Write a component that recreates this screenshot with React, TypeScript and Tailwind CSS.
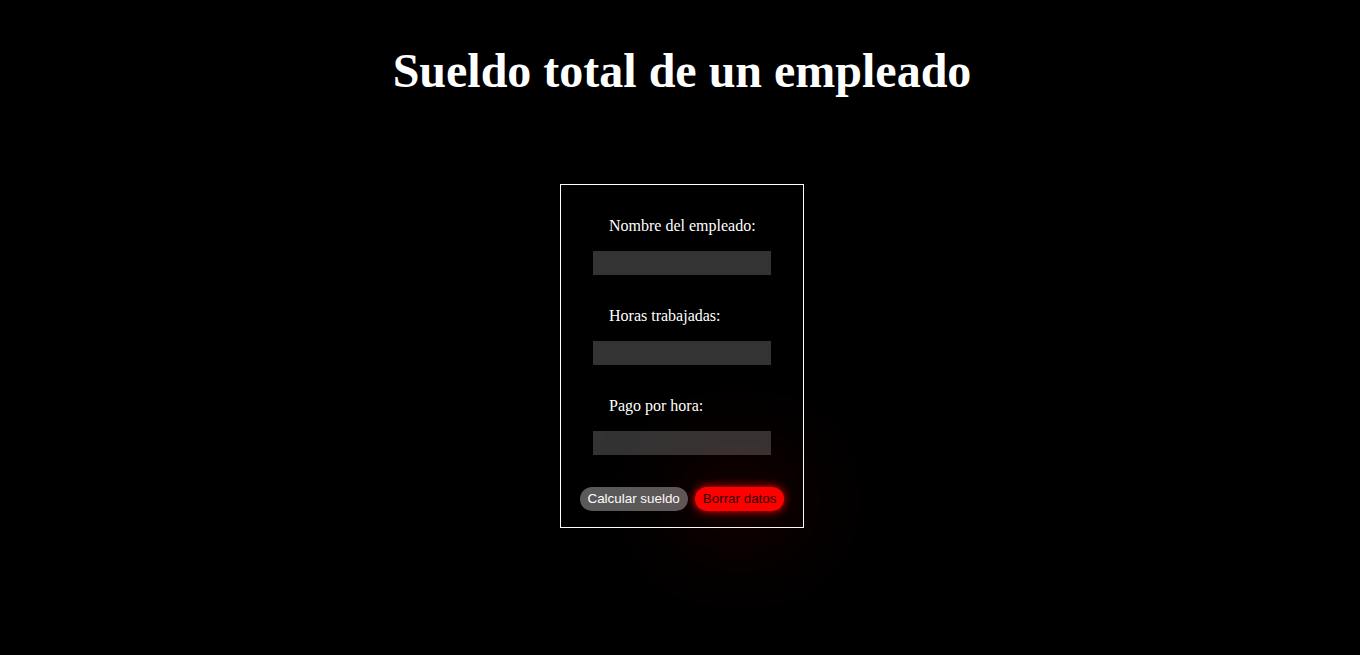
const fields = ["Nombre del empleado:", "Horas trabajadas:", "Pago por hora:"];

export default function App() {
  return (
    <div className="min-h-[655px] bg-black flex flex-col items-center pl-[4px] font-['Liberation_Serif',serif] text-white">
      <h1 className="mt-[47px] text-[48px] leading-none font-bold">Sueldo total de un empleado</h1>

      <form className="mt-[89px] w-[244px] border border-white pt-[31px] pb-[16px] flex flex-col">
        {fields.map((label, i) => (
          <div key={label} className={i > 0 ? "mt-[31px]" : ""}>
            <label className="block pl-[48px] text-[16px] leading-[20px]">{label}</label>
            <input
              type="text"
              className="block mt-[15px] ml-[32px] w-[178px] h-[24px] bg-[#333333] border-0 outline-none text-white"
            />
          </div>
        ))}

        <div className="mt-[32px] flex justify-center gap-[7px] font-['Liberation_Sans',Arial,sans-serif] text-[13.4px]">
          <button
            type="button"
            className="h-[24px] px-[8px] rounded-full bg-[#5a5a5a] text-white"
          >
            Calcular sueldo
          </button>
          <button
            type="button"
            className="h-[24px] px-[8px] rounded-full bg-[#ff0000] text-[#2a0000] shadow-[0_0_10px_#ff0000,0_0_100px_rgba(255,0,0,0.5)]"
          >
            Borrar datos
          </button>
        </div>
      </form>
    </div>
  );
}
